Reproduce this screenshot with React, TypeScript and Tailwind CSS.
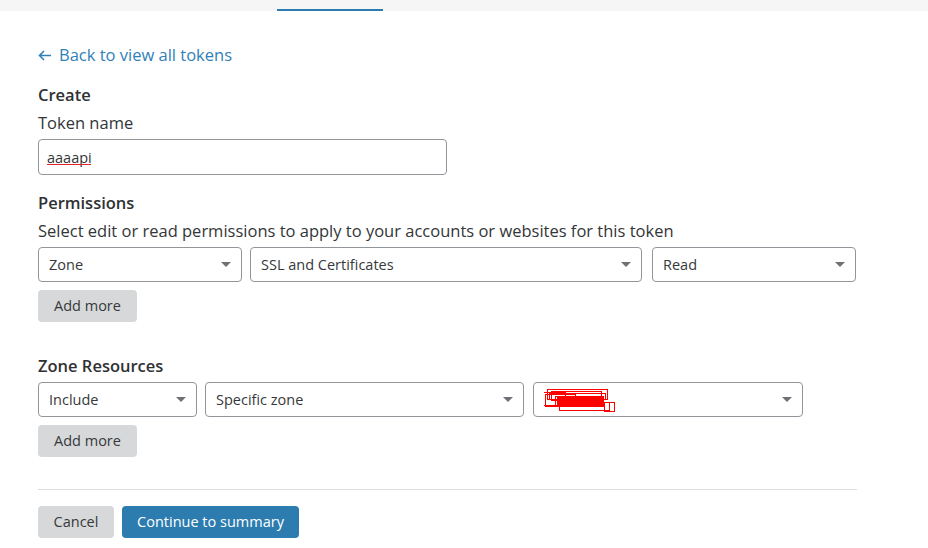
import { useState } from "react";

const font = { fontFamily: '"Open Sans", "Noto Sans", sans-serif' };

function Caret() {
  return (
    <svg width="10" height="5" viewBox="0 0 10 5" className="shrink-0">
      <path d="M0 0 L10 0 L5 5 Z" fill="#6e7276" />
    </svg>
  );
}

function Select({ value, width, children }: { value?: string; width: string; children?: React.ReactNode }) {
  return (
    <div className={`${width} h-[35px] border border-[#92969b] rounded-[4px] bg-white flex items-center pl-[10px] pr-[10px] text-[14.5px] text-[#36393b]`}>
      <div className="flex-1 truncate">{value ?? children}</div>
      <Caret />
    </div>
  );
}

function Redacted() {
  return (
    <svg width="76" height="24" viewBox="0 0 76 24" className="ml-[-3px] mt-[2px]">
      <rect x="16" y="7" width="46" height="10" fill="#ff0000" />
      <g fill="none" stroke="#ff0000" strokeWidth="1">
        <rect x="6.5" y="0.5" width="60" height="10" />
        <rect x="0.5" y="3.5" width="24" height="13" />
        <rect x="10.5" y="2.5" width="50" height="9" />
        <rect x="14.5" y="7.5" width="48" height="10" />
        <rect x="18.5" y="13.5" width="50" height="8" />
        <rect x="63.5" y="13.5" width="10" height="9" />
        <rect x="4.5" y="5.5" width="30" height="12" />
        <rect x="8.5" y="4.5" width="56" height="6" />
      </g>
    </svg>
  );
}

export default function App() {
  const [name, setName] = useState("aaaapi");

  return (
    <div className="w-[928px] h-[548px] bg-white overflow-hidden text-[16.5px] leading-6 text-[#333638]" style={font}>
      {/* tab strip */}
      <div className="h-[11px] bg-[#f6f6f6] flex pl-[277px]">
        <div className="w-[106px] h-[2px] mt-auto bg-[#2c7cb0]" />
      </div>

      <div className="pl-[38px] w-[856px] flex flex-col">
        <a className="mt-[32px] text-[#3181b7] self-start cursor-pointer flex items-center gap-[7px]">
          <svg width="14" height="11" viewBox="0 0 14 11">
            <path d="M13 5.5 H1.5 M6 1 L1.5 5.5 L6 10" fill="none" stroke="#3181b7" strokeWidth="1.6" />
          </svg>
          Back to view all tokens
        </a>

        <div className="mt-[16px] font-semibold text-[#2f3133]">Create</div>
        <div className="mt-[4px]">Token name</div>
        <div className="mt-[4px] relative w-[409px]">
          <input
            value={name}
            onChange={(e) => setName(e.target.value)}
            className="w-full h-[36px] border border-[#92969b] rounded-[4px] px-[8px] text-[14.5px] outline-none"
            style={font}
          />
          {/* spellcheck squiggle */}
          <svg width="44" height="3" viewBox="0 0 44 3" className="absolute left-[9px] top-[24px]">
            <path
              d="M0 2 L1 1 L2 2 L3 1 L4 2 L5 1 L6 2 L7 1 L8 2 L9 1 L10 2 L11 1 L12 2 L13 1 L14 2 L15 1 L16 2 L17 1 L18 2 L19 1 L20 2 L21 1 L22 2 L23 1 L24 2 L25 1 L26 2 L27 1 L28 2 L29 1 L30 2 L31 1 L32 2 L33 1 L34 2 L35 1 L36 2 L37 1 L38 2 L39 1 L40 2 L41 1 L42 2 L43 1 L44 2"
              fill="none"
              stroke="#e3262a"
              strokeWidth="1"
            />
          </svg>
        </div>

        <div className="mt-[16px] font-semibold text-[#2f3133]">Permissions</div>
        <div className="mt-[4px]">Select edit or read permissions to apply to your accounts or websites for this token</div>
        <div className="mt-[4px] flex gap-[8px]">
          <Select value="Zone" width="w-[204px]" />
          <Select value="SSL and Certificates" width="w-[392px]" />
          <Select value="Read" width="w-[204px] ml-[2px]" />
        </div>
        <button className="mt-[8px] self-start w-[99px] h-[32px] rounded-[4px] bg-[#d6d8da] text-[14.5px] text-[#36393b]">Add more</button>

        <div className="mt-[32px] font-semibold text-[#2f3133]">Zone Resources</div>
        <div className="mt-[4px] flex gap-[8px]">
          <Select value="Include" width="w-[159px]" />
          <Select value="Specific zone" width="w-[319px]" />
          <Select width="w-[270px] ml-[1px]">
            <Redacted />
          </Select>
        </div>
        <button className="mt-[8px] self-start w-[99px] h-[32px] rounded-[4px] bg-[#d6d8da] text-[14.5px] text-[#36393b]">Add more</button>

        <div className="mt-[32px] h-px w-[819px] bg-[#dcdcdc]" />

        <div className="mt-[16px] flex gap-[8px]">
          <button className="w-[76px] h-[32px] rounded-[4px] bg-[#d6d8da] text-[14.5px] text-[#36393b]">Cancel</button>
          <button className="w-[177px] h-[32px] rounded-[4px] bg-[#2c7cb0] text-[14.5px] text-white">Continue to summary</button>
        </div>
      </div>
    </div>
  );
}
